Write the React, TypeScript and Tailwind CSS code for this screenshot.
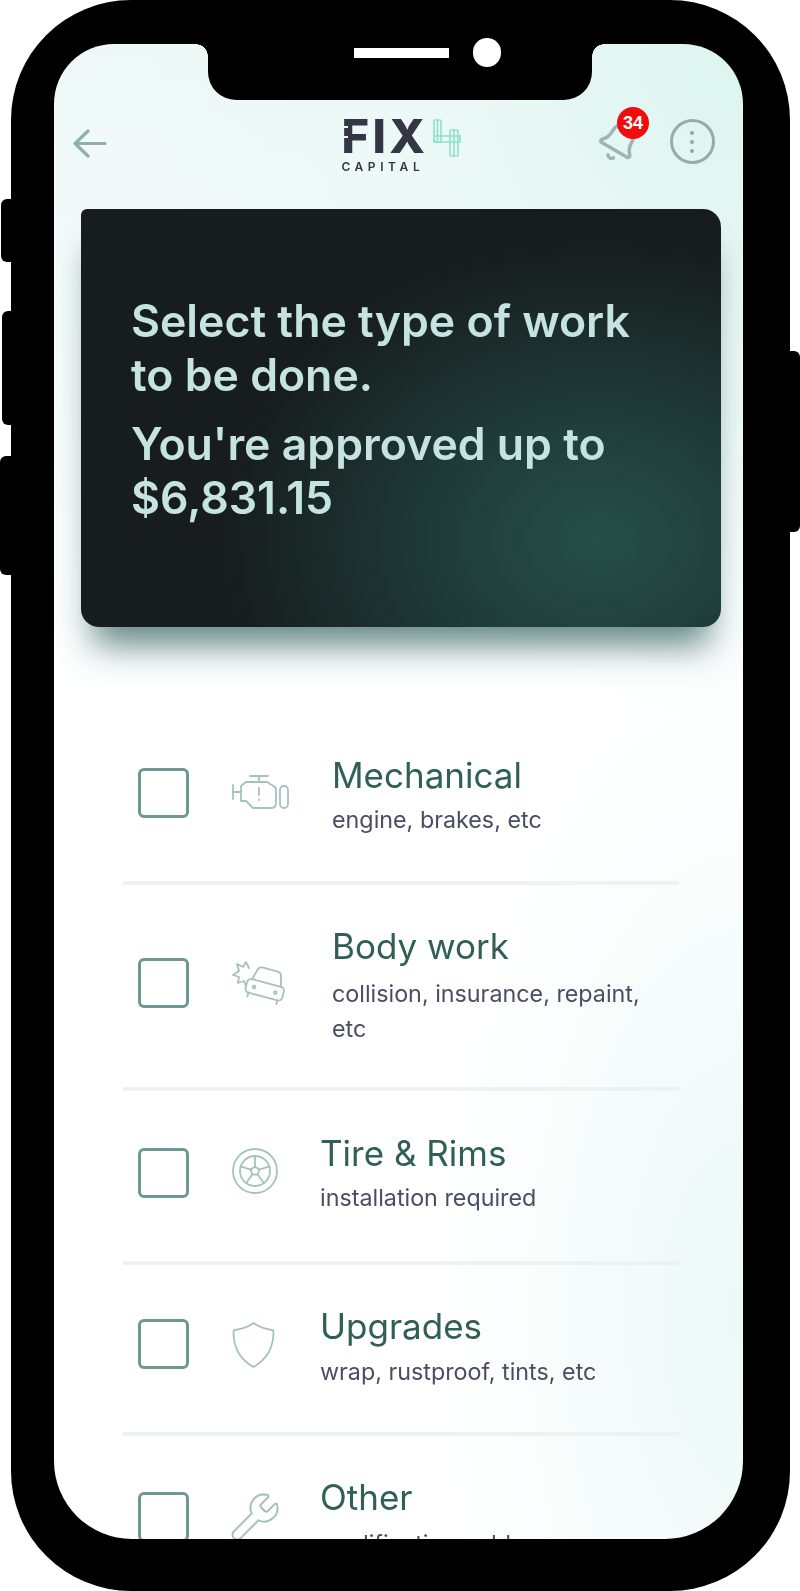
import React from 'react';
import { Bell, Wrench } from 'lucide-react';

const iconStroke = '#a6c2be';

const BackArrow = () => (
  <svg width="34" height="29" viewBox="0 0 34 29" fill="none" stroke="#8fb0ac" strokeWidth="3.2" strokeLinecap="round" strokeLinejoin="round">
    <path d="M2 14.500H32M15 2L2 14.500 15 27" />
  </svg>
);

const EngineIcon = () => (
  <svg width="57" height="35" viewBox="0 0 57 35" fill="none" stroke={iconStroke} strokeWidth="1.8" strokeLinecap="round" strokeLinejoin="round">
    <path d="M1 10v14M1 17h8" />
    <path d="M9 11l5-4h21l8 5c1 1 1 2 1 3v13c0 3-2 5-5 5H21l-7-7H9z" />
    <path d="M27 1v6M18 1h18" />
    <path d="M27 13v7M27 24.500v.5" />
    <rect x="48" y="11" width="8" height="22" rx="4" />
  </svg>
);

const CrashIcon = () => (
  <svg width="56" height="44" viewBox="0 0 56 44" fill="none" stroke={iconStroke} strokeWidth="1.8" strokeLinecap="round" strokeLinejoin="round">
    <path d="M14 25l-2-5-6 2 1-6-6-2 6-4-2-7 6 3 3-5 3 6" />
    <g transform="rotate(15 34 24)">
      <path d="M19 22l3-11q1-3 4-3h16q3 0 4 3l3 11" />
      <rect x="15" y="22" width="38" height="14" rx="4" />
      <path d="M19 36v4M49 36v4" />
      <circle cx="23" cy="29" r="1.4" />
      <circle cx="45" cy="29" r="1.4" />
    </g>
  </svg>
);

const WheelIcon = () => (
  <svg width="46" height="46" viewBox="0 0 46 46" fill="none" stroke={iconStroke} strokeWidth="1.8" strokeLinecap="round" strokeLinejoin="round">
    <circle cx="23" cy="23" r="22" />
    <circle cx="23" cy="23" r="15" />
    <path d="M23 18.500l4.300 3.100-1.600 5H20.300l-1.600-5z" />
    <path d="M23 18.500V8M27.300 21.600l10-3.200M25.700 26.600l6.100 8.500M20.300 26.600l-6.100 8.500M18.700 21.600l-10-3.200" />
  </svg>
);

const ShieldIcon = () => (
  <svg width="43" height="46" viewBox="0 0 43 46" fill="none" stroke={iconStroke} strokeWidth="1.8" strokeLinecap="round" strokeLinejoin="round">
    <path d="M21.500 1C27 5 34 7 40 8c1.500 0 1.500 1 1.500 2 0 14-6 27-20 35C7 37 1.500 24 1.500 10c0-1 0-2 1.500-2 6-1 13-3 18.500-7z" />
  </svg>
);

const LogoMark = () => (
  <svg width="28" height="38" viewBox="0 0 28 38" fill="none" stroke="#8fe0cf" strokeWidth="1.6">
    <rect x="1" y="1" width="7" height="22" rx="1" />
    <path d="M4.500 1v22" />
    <rect x="17" y="11" width="8" height="26" rx="1" />
    <path d="M1 17h26v6H1z" />
    <path d="M21 11v26" />
  </svg>
);

const Logo = () => (
  <div className="flex items-start gap-[4px]">
    <div className="flex flex-col items-start">
      <div className="relative text-[47px] leading-[34px] h-[34px] font-extrabold tracking-[3.5px] text-[#343644]">
        FIX
        <span className="absolute left-0 top-[7px] w-[7px] h-[2px] bg-[#eaf8f6]" />
        <span className="absolute left-0 top-[17px] w-[7px] h-[2px] bg-[#eaf8f6]" />
      </div>
      <div className="mt-[9px] text-[12px] leading-[10px] font-semibold tracking-[4.6px] text-[#343644]">CAPITAL</div>
    </div>
    <LogoMark />
  </div>
);

const Checkbox = ({ top }: { top: string }) => (
  <div className={`w-[51px] h-[50px] shrink-0 rounded-[6px] border-[3px] border-[#6f9894] ${top}`} />
);

interface RowProps {
  title: string;
  sub: string;
  boxTop: string;
  iconTop: string;
  iconLeft?: string;
  textLeft: string;
  textTop?: string;
  subTop?: string;
  height: string;
  icon: React.ReactNode;
  last?: boolean;
}

const Row = ({ title, sub, boxTop, iconTop, iconLeft = 'ml-[43px]', textLeft, textTop = 'pt-[39px]', subTop = 'mt-[5px]', height, icon, last }: RowProps) => (
  <div className={`flex items-start pl-[15px] ${height} ${last ? '' : 'border-b-[4px] border-[#eef3f2]'}`}>
    <Checkbox top={boxTop} />
    <div className={`shrink-0 ${iconLeft} ${iconTop}`}>{icon}</div>
    <div className={`${textTop} ${textLeft}`}>
      <div className="text-[35px] leading-[44px] font-normal text-[#2f5f55]">{title}</div>
      <div className={`${subTop} text-[23.300px] leading-[35px] text-[#494e62]`}>{sub}</div>
    </div>
  </div>
);

export default function App() {
  return (
    <div className="relative w-[800px] h-[1591px] overflow-hidden bg-white [font-family:Inter,sans-serif]">
      {/* side buttons */}
      <div className="absolute left-[1px] top-[199px] w-[14px] h-[63px] rounded-l-[6px] bg-black" />
      <div className="absolute left-[2px] top-[311px] w-[14px] h-[114px] rounded-l-[6px] bg-black" />
      <div className="absolute left-0 top-[456px] w-[14px] h-[119px] rounded-l-[6px] bg-black" />
      <div className="absolute right-0 top-[351px] w-[14px] h-[181px] rounded-r-[6px] bg-black" />

      <div className="ml-[11px] w-[779px] h-[1591px] bg-black rounded-[120px] pt-[44px]">
        <div className="relative ml-[43px] w-[689px] h-[1495px]">
          <div className="w-full h-full overflow-hidden rounded-t-[60px] rounded-b-[78px] bg-[radial-gradient(ellipse_90%_45%_at_100%_0%,#dcf4ef_0%,#eaf8f6_45%,rgba(255,255,255,0)_100%),radial-gradient(ellipse_45%_45%_at_100%_85%,#ecf9f7_0%,rgba(255,255,255,0)_100%),linear-gradient(180deg,#eef9f7_0%,#ffffff_45%)]">
            <div className="blur-[0.6px]">
              {/* header */}
              <div className="flex items-start justify-between h-[165px] pt-[75px] pl-[19px] pr-[28px]">
                <div className="mt-[10px]">
                  <BackArrow />
                </div>
                <div className="ml-[98px]">
                  <Logo />
                </div>
                <div className="flex items-start gap-[31px]">
                  <div className="relative mt-[1px] w-[42px] h-[42px]">
                    <Bell size={44} strokeWidth={1.9} className="rotate-[30deg] text-[#9db5b3]" />
                    <div className="absolute left-[20px] top-[-13px] flex w-[32px] h-[32px] items-center justify-center rounded-full bg-[#f10d0d] text-[18px] font-bold text-white [font-family:'Liberation_Sans',sans-serif]">
                      34
                    </div>
                  </div>
                  <div className="flex w-[45px] h-[45px] flex-col items-center justify-center gap-[5px] rounded-full border-[3px] border-[#94adac]">
                    <span className="w-[4px] h-[4px] rounded-full bg-[#8fa8a7]" />
                    <span className="w-[4px] h-[4px] rounded-full bg-[#8fa8a7]" />
                    <span className="w-[4px] h-[4px] rounded-full bg-[#8fa8a7]" />
                  </div>
                </div>
              </div>

              {/* approval card */}
              <div className="ml-[27px] w-[640px] h-[418px] rounded-[18px] rounded-tl-[6px] pl-[50px] pt-[85px] text-[44.600px] leading-[54px] font-semibold text-[#c5e3df] shadow-[0_30px_34px_-12px_rgba(60,105,100,0.8)] bg-[radial-gradient(ellipse_380px_300px_at_81%_79%,#264f49_0%,#1f3a37_45%,#171c1e_100%)]">
                <p>Select the type of work<br />to be done.</p>
                <p className="mt-[15px]">You're approved up to<br />$6,831.15</p>
              </div>

              {/* work types */}
              <div className="mt-[87px] ml-[69px] mr-[64px]">
                <Row title="Mechanical" sub="engine, brakes, etc" height="h-[171px]" boxTop="mt-[54px]" iconTop="mt-[61px]" textLeft="ml-[43px]" icon={<EngineIcon />} />
                <Row title="Body work" sub="collision, insurance, repaint, etc" height="h-[206px]" subTop="mt-[8px]" boxTop="mt-[73px]" iconTop="mt-[76px]" textLeft="ml-[44px] w-[320px]" icon={<CrashIcon />} />
                <Row title="Tire & Rims" sub="installation required" height="h-[174px]" boxTop="mt-[57px]" iconTop="mt-[57px]" textLeft="ml-[42px]" textTop="pt-[40px]" icon={<WheelIcon />} />
                <Row title="Upgrades" sub="wrap, rustproof, tints, etc" height="h-[171px]" boxTop="mt-[54px]" iconTop="mt-[57px]" textLeft="ml-[45px]" subTop="mt-[6px]" icon={<ShieldIcon />} />
                <Row title="Other" sub="modification, add-on" height="h-[200px]" subTop="mt-[7px]" boxTop="mt-[56px]" iconTop="mt-[54px]" iconLeft="ml-[39px]" textLeft="ml-[38px]" icon={<Wrench size={54} strokeWidth={0.9} className="text-[#a6c2be]" />} last />
              </div>
            </div>
          </div>

          {/* notch */}
          <div className="absolute left-[154px] top-[-1px] w-[384px] h-[57px] rounded-b-[28px] bg-black">
            <div className="absolute left-[146px] top-[5px] w-[95px] h-[10px] bg-white" />
            <div className="absolute left-[265px] top-[-5px] w-[28px] h-[29px] rounded-full bg-white" />
          </div>
          <div className="absolute left-[142px] top-0 w-[12px] h-[12px] bg-[radial-gradient(circle_at_0_100%,transparent_11.5px,black_12px)]" />
          <div className="absolute left-[538px] top-0 w-[12px] h-[12px] bg-[radial-gradient(circle_at_100%_100%,transparent_11.5px,black_12px)]" />
        </div>
      </div>
    </div>
  );
}
